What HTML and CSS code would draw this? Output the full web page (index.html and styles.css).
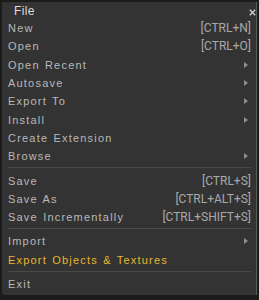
FILE: index.html
```html
<!DOCTYPE html>
<html lang="en">
<head>
<meta charset="UTF-8" />
<meta name="viewport" content="width=device-width, initial-scale=1" />
<title>File menu</title>
<link rel="stylesheet" href="styles.css">
</head>
<body>

<div class="menu">
  <div class="titulo">
    <span>File</span>
    <svg class="cerrar" width="7" height="7" viewBox="0 0 7 7"><path d="M0.8 0.8 L6.2 6.2 M6.2 0.8 L0.8 6.2" stroke="#c8c8c8" stroke-width="1.5"/></svg>
  </div>

  <div class="item"><span>New</span><span class="atajo">[CTRL+N]</span></div>
  <div class="item"><span>Open</span><span class="atajo">[CTRL+O]</span></div>
  <div class="item"><span>Open Recent</span><span class="flecha"></span></div>
  <div class="item"><span>Autosave</span><span class="flecha"></span></div>
  <div class="item"><span>Export To</span><span class="flecha"></span></div>
  <div class="item"><span>Install</span><span class="flecha"></span></div>
  <div class="item"><span>Create Extension</span></div>
  <div class="item"><span>Browse</span><span class="flecha"></span></div>
  <div class="separador"></div>
  <div class="item"><span>Save</span><span class="atajo">[CTRL+S]</span></div>
  <div class="item"><span>Save As</span><span class="atajo">[CTRL+ALT+S]</span></div>
  <div class="item"><span>Save Incrementally</span><span class="atajo">[CTRL+SHIFT+S]</span></div>
  <div class="separador"></div>
  <div class="item"><span>Import</span><span class="flecha"></span></div>
  <div class="item destacado"><span>Export Objects &amp; Textures</span></div>
  <div class="separador"></div>
  <div class="item"><span>Exit</span></div>
</div>

</body>
</html>
```

FILE: styles.css
```css
body {
  margin: 0;
  background: #1b1b1b;
  font-family: 'Liberation Sans', Arial, sans-serif;
}
.menu {
  margin: 2px 0 0 2px;
  width: 255px;
  height: 293px;
  background: #333333;
  border-right: 1px solid #5c5c5c;
  border-bottom-left-radius: 3px;
  box-sizing: border-box;
}
.titulo {
  height: 17px;
  padding-left: 12px;
  padding-right: 0;
  display: flex;
  align-items: center;
  justify-content: space-between;
  color: #dcdcdc;
  font-size: 12px;
  letter-spacing: 0.4px;
}
.cerrar {
  margin-top: 4px;
}
.item {
  height: 18.3px;
  padding: 0 5px 0 6px;
  display: flex;
  align-items: center;
  justify-content: space-between;
  color: #b9b9b9;
  font-size: 11px;
  letter-spacing: 1.2px;
  word-spacing: 1px;
  white-space: nowrap;
}
.item.destacado {
  color: #e8b62e;
}
.atajo {
  font-family: Roboto, 'Liberation Sans', sans-serif;
  font-size: 12px;
  letter-spacing: 0;
  word-spacing: 0;
  color: #a9a9a9;
}
/* triangulito de submenu */
.flecha {
  width: 0;
  height: 0;
  margin-right: 3px;
  border-top: 3px solid transparent;
  border-bottom: 3px solid transparent;
  border-left: 4px solid #8e8e8e;
}
.separador {
  height: 1px;
  margin: 2px 5px 3px 6px;
  background: #4a4a4a;
}
```
